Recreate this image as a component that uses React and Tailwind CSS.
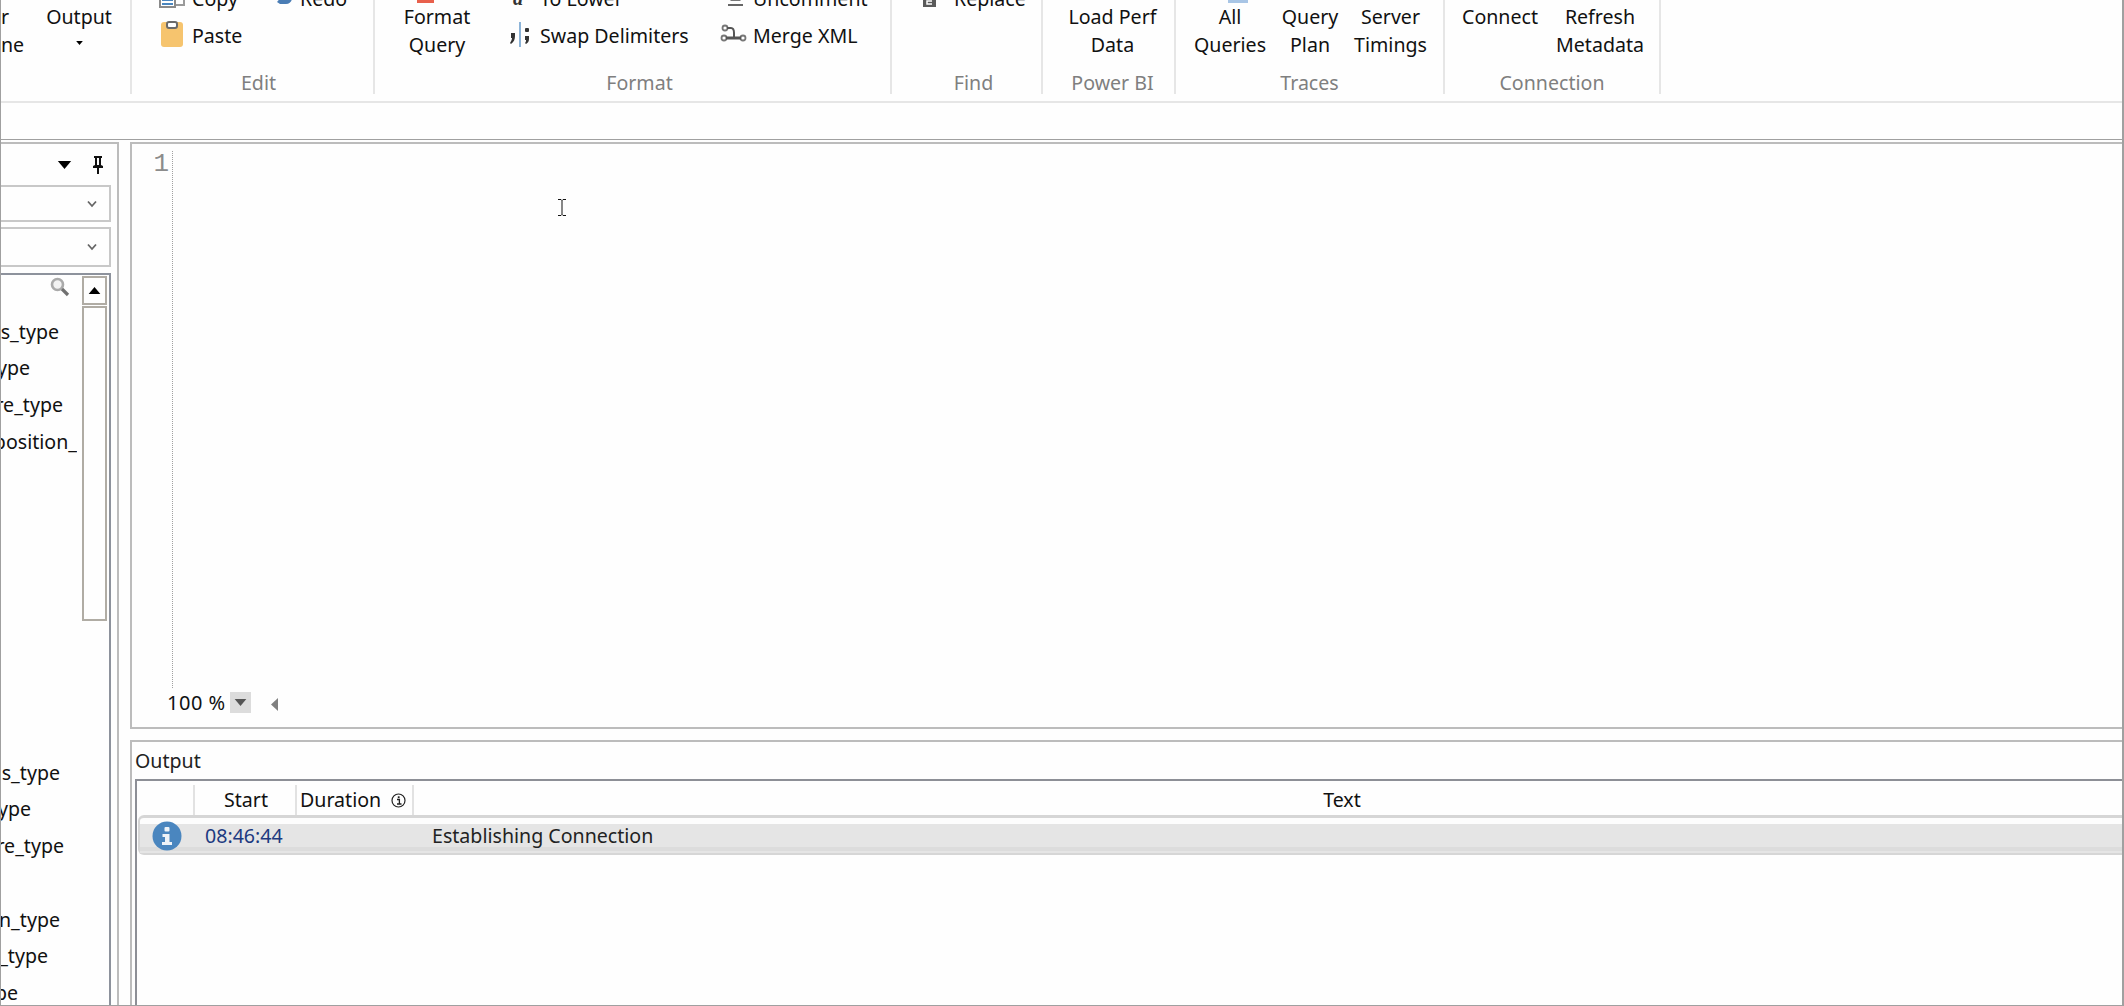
import React from "react";

const listRows = [
  ["s_type", "w-[58px]"],
  ["ype", "w-[29px]"],
  ["re_type", "w-[62px]"],
  ["position_", "w-[76px]"],
  null, null, null, null, null, null, null, null,
  ["s_type", "w-[59px]"],
  ["ype", "w-[30px]"],
  ["re_type", "w-[63px]"],
  null,
  ["n_type", "w-[59px]"],
  ["_type", "w-[47px]"],
  ["pe", "w-[17px]"],
];

function Group({ className, labelClass = "", label, children }) {
  return (
    <div className={`h-[94px] shrink-0 flex flex-col border-r-2 border-[#e6e6e6] ${className}`}>
      <div className="h-[70px] flex items-start">{children}</div>
      <div className={`h-[24px] pt-[2px] flex items-center justify-center text-[#7f7f7f] ${labelClass}`}>{label}</div>
    </div>
  );
}

function BigButton({ className, lines, top }) {
  return (
    <div className={`flex flex-col items-center text-center leading-[28px] ${className}`}>
      <div className="h-[3px] w-full flex justify-center">{top}</div>
      {lines.map((l) => (
        <span key={l} className="whitespace-nowrap">{l}</span>
      ))}
    </div>
  );
}

function SmallRow({ iconClass, icon, text }) {
  return (
    <div className="h-[37px] flex items-center whitespace-nowrap">
      <div className={`h-[37px] pt-[1px] shrink-0 ${iconClass}`}>{icon}</div>
      <span>{text}</span>
    </div>
  );
}

function Ic({ w, children }) {
  // first row starts 19px above the page top, second row at y=18
  return (
    <svg width={w} height="37" viewBox={`0 0 ${w} 37`} className="block">
      {children}
    </svg>
  );
}

const CopyIcon = (
  <Ic w={34}>
    <rect x="2" y="14" width="15" height="12" fill="#fff" stroke="#8a8a8a" strokeWidth="2" />
    <rect x="4" y="18" width="11" height="2" fill="#4a86bf" />
    <rect x="4" y="22" width="11" height="2" fill="#4a86bf" />
    <path d="M18 15h8v9h-8" fill="none" stroke="#9a9a9a" strokeWidth="2" />
  </Ic>
);

const PasteIcon = (
  <Ic w={34}>
    <rect x="3" y="4" width="22" height="25" rx="3" fill="#f6c46e" />
    <rect x="9" y="4" width="10" height="6" rx="2" fill="#fff" stroke="#6a6a6a" strokeWidth="2" />
  </Ic>
);

const RedoIcon = (
  <Ic w={27}>
    <path d="M4 21l5-6h10v2c0 3-2 6-6 6H7z" fill="#4a7db5" />
  </Ic>
);

const LowerIcon = (
  <Ic w={42}>
    <text x="15" y="24" fontSize="20" fontWeight="700" fontStyle="italic" fill="#333" fontFamily="Liberation Serif, serif">a</text>
  </Ic>
);

const SwapIcon = (
  <Ic w={42}>
    <rect x="21" y="4" width="2" height="25" fill="#8db4d8" />
    <path d="M13 15h4v3c0 3-1 6-4 8l-1-1c1-2 2-3 2-5h-1z" fill="#333" />
    <rect x="27" y="10" width="4" height="4" rx="1" fill="#333" />
    <path d="M27 18h4v3c0 2-1 4-3 5l-1-1c1-1 1-2 1-3h-1z" fill="#333" />
  </Ic>
);

const UncommentIcon = (
  <Ic w={42}>
    <path d="M19 20l4-4v-4h3v4l4 4z" fill="#777" />
    <rect x="17" y="23" width="15" height="2" fill="#666" />
  </Ic>
);

const MergeIcon = (
  <Ic w={42}>
    <circle cx="14" cy="10" r="2.5" fill="#fff" stroke="#777" strokeWidth="1.8" />
    <circle cx="13" cy="20" r="2.5" fill="#fff" stroke="#777" strokeWidth="1.8" />
    <circle cx="32" cy="20" r="2.5" fill="#fff" stroke="#777" strokeWidth="1.8" />
    <path d="M16 10h4c3 0 3 3 3 5v5" fill="none" stroke="#555" strokeWidth="2" />
    <path d="M15 20h15" stroke="#555" strokeWidth="3" />
  </Ic>
);

const ReplaceIcon = (
  <Ic w={36}>
    <rect x="5" y="13" width="13" height="13" fill="#5a5a5a" />
    <path d="M14 20h-5v3h5" fill="none" stroke="#fff" strokeWidth="1.5" />
  </Ic>
);

function TriangleDown({ className }) {
  return (
    <svg viewBox="0 0 10 6" className={className}>
      <path d="M0 0h10L5 6z" fill="currentColor" />
    </svg>
  );
}

function Chevron() {
  return (
    <svg width="10" height="8" viewBox="0 0 10 8" className="mr-[12px]">
      <path d="M1 1.5l4 4.5 4-4.5" fill="none" stroke="#666" strokeWidth="1.8" />
    </svg>
  );
}

function Ribbon() {
  return (
    <div className="h-[101px] shrink-0 flex items-start overflow-hidden">
      <Group className="w-[131px]" label="">
        <BigButton className="w-[14px] !items-start" lines={["r", "ne"]} />
        <div className="ml-[24px] w-[80px] flex flex-col items-center leading-[28px] pt-[3px]">
          <span>Output</span>
          <TriangleDown className="w-[7px] h-[4px] mt-[10px] text-black" />
        </div>
      </Group>

      <Group className="w-[243px]" labelClass="pl-[12px]" label="Edit">
        <div className="pl-[26px] flex -mt-[20px]">
          <div className="w-[115px]">
            <SmallRow iconClass="w-[34px]" icon={CopyIcon} text="Copy" />
            <SmallRow iconClass="w-[34px]" icon={PasteIcon} text="Paste" />
          </div>
          <SmallRow iconClass="w-[27px]" icon={RedoIcon} text="Redo" />
        </div>
      </Group>

      <Group className="w-[517px]" labelClass="pl-[14px]" label="Format">
        <BigButton
          className="w-[124px]"
          lines={["Format", "Query"]}
          top={<div className="w-[17px] h-[3px] bg-[#e8604c] -ml-[24px]" />}
        />
        <div className="flex -mt-[20px] -ml-[1px]">
          <div className="w-[213px]">
            <SmallRow iconClass="w-[42px]" icon={LowerIcon} text="To Lower" />
            <SmallRow iconClass="w-[42px]" icon={SwapIcon} text="Swap Delimiters" />
          </div>
          <div>
            <SmallRow iconClass="w-[42px]" icon={UncommentIcon} text="Uncomment" />
            <SmallRow iconClass="w-[42px]" icon={MergeIcon} text="Merge XML" />
          </div>
        </div>
      </Group>

      <Group className="w-[151px]" labelClass="pl-[14px]" label="Find">
        <div className="pl-[26px] -mt-[20px]">
          <SmallRow iconClass="w-[36px]" icon={ReplaceIcon} text="Replace" />
        </div>
      </Group>

      <Group className="w-[133px] pl-[8px]" label="Power BI">
        <BigButton className="w-full" lines={["Load Perf", "Data"]} />
      </Group>

      <Group className="w-[269px]" label="Traces">
        <div className="pl-[14px] flex">
          <BigButton
            className="w-[80px]"
            lines={["All", "Queries"]}
            top={<div className="w-[20px] h-[3px] bg-[#a8c5e5] ml-[16px]" />}
          />
          <BigButton className="w-[80px]" lines={["Query", "Plan"]} />
          <BigButton className="w-[81px]" lines={["Server", "Timings"]} />
        </div>
      </Group>

      <Group className="w-[216px]" label="Connection">
        <div className="pl-[5px] flex">
          <BigButton className="w-[100px]" lines={["Connect"]} />
          <BigButton className="w-[100px]" lines={["Refresh", "Metadata"]} />
        </div>
      </Group>
    </div>
  );
}

function LeftPane() {
  return (
    <div className="w-[118px] shrink-0 flex flex-col border-t-2 border-r-2 border-[#bcbcbc]">
      <div className="h-[41px] shrink-0 flex items-center justify-end pr-[13px] gap-[20px]">
        <TriangleDown className="w-[15px] h-[8px] text-black" />
        <svg width="12" height="19" viewBox="0 0 12 19">
          <path d="M2 1h8v2H9v7l2 1v2H7v6H5v-6H1v-2l2-1V3H2z M5 3v7h2V3z" fill="#111" fillRule="evenodd" />
        </svg>
      </div>
      <div className="w-[110px] h-[37px] shrink-0 flex items-center justify-end border-t-2 border-b-2 border-r-2 border-[#c8c8c8]">
        <Chevron />
      </div>
      <div className="w-[110px] h-[40px] shrink-0 mt-[5px] flex items-center justify-end border-t-2 border-b-2 border-r-2 border-[#c8c8c8]">
        <Chevron />
      </div>
      <div className="w-[110px] flex-1 min-h-0 mt-[6px] flex border-t-2 border-r-2 border-[#8d929c]">
        <div className="w-[81px] shrink-0 overflow-hidden">
          <div className="h-[38px] flex justify-end pr-[12px] pt-[2px]">
            <svg width="20" height="20" viewBox="0 0 20 20">
              <circle cx="7.5" cy="7.5" r="5.5" fill="#f2f2f2" stroke="#aaaaaa" strokeWidth="2.6" />
              <path d="M12 12l6 6" stroke="#707070" strokeWidth="3.2" />
            </svg>
          </div>
          {listRows.map((row, i) => (
            <div key={i} className="h-[36.75px] flex items-center">
              {row && (
                <div className={`flex justify-end overflow-hidden whitespace-nowrap ${row[1]}`}>{row[0]}</div>
              )}
            </div>
          ))}
        </div>
        <div className="w-[25px] shrink-0 pt-[1px]">
          <div className="h-[29px] flex items-center justify-center border-2 border-[#b0aca4]">
            <TriangleDown className="w-[13px] h-[7px] rotate-180 text-black" />
          </div>
          <div className="h-[315px] mt-[1px] border-2 border-[#b0aca4]" />
        </div>
      </div>
    </div>
  );
}

function Editor() {
  return (
    <div className="relative h-[587px] shrink-0 flex flex-col border-t-2 border-l-2 border-b-2 border-[#bcbcbc]">
      <div className="h-[548px] shrink-0 pt-[7px] flex">
        <div className="w-[41px] h-[537px] border-r border-dotted border-[#a0a0a0] flex justify-end pr-[3px]">
          <span className="font-['Liberation_Mono',monospace] text-[26px] leading-[26px] text-[#8c8c8c]">1</span>
        </div>
      </div>
      <div className="h-[21px] flex items-center pl-[35px]">
        <span className="whitespace-nowrap tracking-[0.5px] text-[20px]">100 %</span>
        <div className="ml-[4px] w-[21px] h-[21px] flex items-center justify-center bg-[#dcdcdc]">
          <TriangleDown className="w-[13px] h-[7px] text-[#555]" />
        </div>
        <svg width="8" height="13" viewBox="0 0 8 13" className="ml-[20px] mt-[3px]">
          <path d="M7 0v13L0 6.5z" fill="#808080" />
        </svg>
      </div>
      {/* mouse pointer sitting over the editor */}
      <svg width="8" height="17" viewBox="0 0 8 17" className="absolute left-[426px] top-[55px]">
        <path d="M0 .5h3l1 1 1-1h3M4 1.5v14M0 16.5h3l1-1 1 1h3" fill="none" stroke="#111" />
      </svg>
    </div>
  );
}

function OutputPane() {
  return (
    <div className="flex-1 min-h-0 mt-[11px] flex flex-col border-t-2 border-l-2 border-[#bcbcbc] overflow-hidden">
      <div className="h-[37px] shrink-0 pl-[3px] flex items-center leading-none text-[#222]">Output</div>
      <div className="flex-1 min-h-0 ml-[3px] border-t-2 border-l-2 border-[#8d8f96] overflow-hidden">
        <div className="h-[34px] pt-[4px] flex">
          <div className="w-[58px] shrink-0 border-r-2 border-[#e2e2e2]" />
          <div className="w-[102px] shrink-0 flex items-center justify-center border-r-2 border-[#e2e2e2] pl-[2px]">Start</div>
          <div className="w-[117px] shrink-0 flex items-center pl-[3px] border-r-2 border-[#e2e2e2]">
            <span>Duration</span>
            <svg width="15" height="15" viewBox="0 0 15 15" className="ml-[10px]">
              <circle cx="7.5" cy="7.5" r="6.5" fill="none" stroke="#222" strokeWidth="1.2" />
              <path d="M6 6.5h2.4V11M6 11h4.5" fill="none" stroke="#222" strokeWidth="1.3" />
              <rect x="6.8" y="3.3" width="1.8" height="1.8" fill="#222" />
            </svg>
          </div>
          <div className="w-[1856px] shrink-0 flex items-center justify-center">Text</div>
        </div>
        <div className="ml-[1px] h-[40px] rounded-l-[6px] border-t-[3px] border-b-2 border-l-2 border-[#d6d6d6] pt-[6px] bg-[#fdfdfd]">
          <div className="h-[29px] bg-[#e5e5e5]">
            <div className="h-[23px] flex items-center">
              <svg width="30" height="30" viewBox="0 0 30 30" className="ml-[12px] shrink-0">
                <circle cx="15" cy="15" r="14.5" fill="#4a86bf" />
                <rect x="12.5" y="6" width="5" height="4.5" rx="1" fill="#eef3f8" />
                <path d="M10.5 13h7v8h2.5v3h-10v-3H13v-5h-2.5z" fill="#eef3f8" />
              </svg>
              <span className="ml-[23px] w-[227px] shrink-0 text-[#1d3a80]">08:46:44</span>
              <span className="whitespace-nowrap text-[#222]">Establishing Connection</span>
            </div>
            <div className="h-[4px] bg-[#dcdcdc]" />
          </div>
        </div>
      </div>
    </div>
  );
}

export default function App() {
  return (
    <div className="w-[2124px] h-[1006px] overflow-hidden flex flex-col bg-[#fefefe] border-l border-r-2 border-b border-[#a0a0a0] font-['Noto_Sans',sans-serif] text-[19.6px] text-[#111]">
      <Ribbon />
      <div className="h-[2px] shrink-0 bg-[#e6e6e6]" />
      {/* empty toolbar band */}
      <div className="h-[37px] shrink-0 border-b border-[#a0a0a0]" />
      <div className="h-[2px] shrink-0" />
      <div className="flex-1 min-h-0 flex">
        <LeftPane />
        <div className="flex-1 min-w-0 ml-[11px] flex flex-col">
          <Editor />
          <OutputPane />
        </div>
      </div>
    </div>
  );
}
